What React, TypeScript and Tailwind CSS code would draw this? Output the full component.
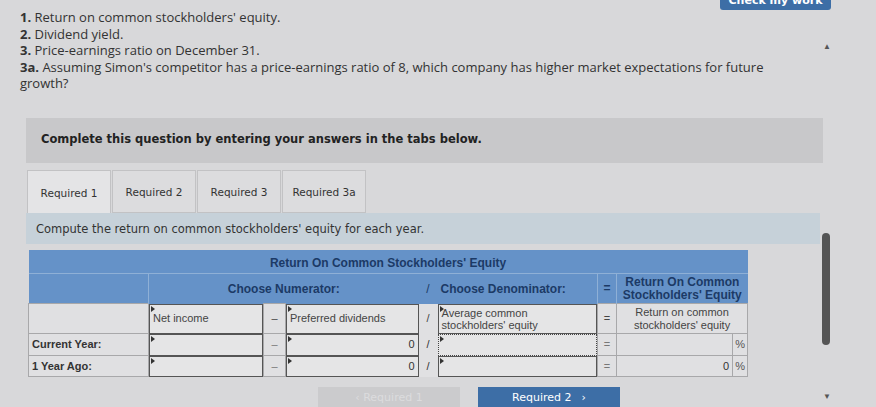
import React from "react";

const QUESTIONS = [
  { num: "1.", text: "Return on common stockholders' equity." },
  { num: "2.", text: "Dividend yield." },
  { num: "3.", text: "Price-earnings ratio on December 31." },
  {
    num: "3a.",
    text: "Assuming Simon's competitor has a price-earnings ratio of 8, which company has higher market expectations for future growth?",
  },
];

const TABS = ["Required 1", "Required 2", "Required 3", "Required 3a"];

function Marker() {
  return (
    <span className="absolute left-[1px] top-[1px] w-0 h-0 border-y-[3px] border-y-transparent border-l-[4px] border-l-[#333]" />
  );
}

function InputBox({
  children,
  align = "left",
  dotted = false,
}: {
  children?: React.ReactNode;
  align?: "left" | "right";
  dotted?: boolean;
}) {
  return (
    <div
      className={
        "relative h-full flex items-center px-[3px] bg-[#e5e5e6] " +
        (dotted ? "border border-dotted border-[#444] " : "border border-[#555] ") +
        (align === "right" ? "justify-end" : "justify-start")
      }
    >
      <Marker />
      {children}
    </div>
  );
}

export default function App() {
  return (
    <div className="relative w-[876px] h-[407px] overflow-hidden bg-[#d8d8da] text-[#333]">
      {/* top button, cut off by the window edge */}
      <div className="absolute left-[720px] top-[-10px] w-[111px] h-[20px] rounded-[3px] bg-[#3d6ea6] text-white text-[11px] font-bold flex items-end justify-center pb-[1px] [font-family:'DejaVu_Sans',sans-serif]">
        Check my work
      </div>

      {/* scrollbar */}
      <div className="absolute left-[823px] top-[40px] text-[8px] text-[#555]">▲</div>
      <div className="absolute left-[822px] top-[233px] w-[8px] h-[112px] rounded-full bg-[#555]" />
      <div className="absolute left-[823px] top-[390px] text-[8px] text-[#555]">▼</div>

      <div className="flex flex-col pl-[20px] pt-[9px] w-[823px]">
        <div className="flex flex-col text-[13px] leading-[16.5px] [font-family:'Open_Sans',sans-serif] pr-[30px]">
          {QUESTIONS.map((q) => (
            <p key={q.num}>
              <span className="font-bold">{q.num}</span> {q.text}
            </p>
          ))}
        </div>

        <div className="ml-[6px] mt-[26px] h-[45px] bg-[#c8c8ca] flex items-center pl-[15px] text-[11.5px] font-bold text-[#222] [font-family:'DejaVu_Sans',sans-serif]">
          Complete this question by entering your answers in the tabs below.
        </div>

        <div className="ml-[7px] mt-[7px] flex h-[43px] [font-family:'DejaVu_Sans',sans-serif] text-[10.5px] text-[#333]">
          {TABS.map((t, i) => (
            <div
              key={t}
              className={
                "flex items-center justify-center pt-[4px] w-[84px] border border-[#c2c2c4] mr-[1px] " +
                (i === 0 ? "bg-[#e4e4e6] border-b-0" : "bg-[#dcdcde]")
              }
            >
              {t}
            </div>
          ))}
        </div>

        <div className="ml-[6px] h-[31px] w-[794px] bg-[#c6d1d9] flex items-center pl-[10px] pt-[4px] text-[11.5px] text-[#333] [font-family:'DejaVu_Sans',sans-serif]">
          Compute the return on common stockholders' equity for each year.
        </div>

        <table className="ml-[8px] mt-[6px] table-fixed border-collapse w-[719px] text-[11px] [font-family:'Liberation_Sans',Arial,sans-serif]">
          <colgroup>
            <col className="w-[120px]" />
            <col className="w-[115px]" />
            <col className="w-[22px]" />
            <col className="w-[133px]" />
            <col className="w-[19px]" />
            <col className="w-[160px]" />
            <col className="w-[19px]" />
            <col className="w-[116px]" />
            <col className="w-[15px]" />
          </colgroup>
          <tbody>
            <tr className="h-[24px] bg-[#6592c8] text-[#1c3a66] font-bold text-[12px]">
              <td colSpan={9} className="text-center align-bottom pb-[1px] border-b border-[#8fb0d6]">
                Return On Common Stockholders' Equity
              </td>
            </tr>
            <tr className="h-[30px] bg-[#6592c8] text-[#1c3a66] font-bold text-[12px] leading-[13px]">
              <td className="border-r border-[#8fb0d6]" />
              <td colSpan={3} className="text-center pt-[2px]">
                Choose Numerator:
              </td>
              <td className="text-center font-normal pt-[2px]">/</td>
              <td className="pl-[3px] pt-[2px]">Choose Denominator:</td>
              <td className="text-center border-l border-[#8fb0d6]">=</td>
              <td colSpan={2} className="text-center border-l border-[#8fb0d6]">
                Return On Common
                <br />
                Stockholders' Equity
              </td>
            </tr>
            <tr className="h-[30px] bg-[#e0e0e2] text-[#444]">
              <td className="border border-[#a8a8aa]" />
              <td className="p-0 h-[30px]">
                <InputBox>Net income</InputBox>
              </td>
              <td className="text-center border border-[#a8a8aa]">–</td>
              <td className="p-0 h-[30px]">
                <InputBox>Preferred dividends</InputBox>
              </td>
              <td className="text-center">/</td>
              <td className="p-0 h-[30px]">
                <div className="relative h-full flex items-center px-[3px] leading-[12px] bg-[#e5e5e6] border border-[#555] border-b-dotted">
                  <Marker />
                  Average common
                  <br />
                  stockholders' equity
                </div>
              </td>
              <td className="text-center border border-[#a8a8aa]">=</td>
              <td colSpan={2} className="text-center leading-[13px] border border-[#a8a8aa]">
                Return on common
                <br />
                stockholders' equity
              </td>
            </tr>
            <tr className="h-[22px] bg-[#e0e0e2] text-[#333]">
              <td className="border border-[#a8a8aa] pl-[3px] font-bold text-[#333]">Current Year:</td>
              <td className="p-0 h-[22px]">
                <InputBox />
              </td>
              <td className="text-center border border-[#a8a8aa] text-[#777]">–</td>
              <td className="p-0 h-[22px]">
                <InputBox align="right">0</InputBox>
              </td>
              <td className="text-center">/</td>
              <td className="p-0 h-[22px]">
                <InputBox dotted />
              </td>
              <td className="text-center border border-[#a8a8aa] text-[#777]">=</td>
              <td className="border border-[#a8a8aa]" />
              <td className="border border-[#a8a8aa] text-center text-[#555]">%</td>
            </tr>
            <tr className="h-[21px] bg-[#e0e0e2] text-[#333]">
              <td className="border border-[#a8a8aa] pl-[3px] font-bold text-[#333]">1 Year Ago:</td>
              <td className="p-0 h-[21px]">
                <InputBox />
              </td>
              <td className="text-center border border-[#a8a8aa] text-[#777]">–</td>
              <td className="p-0 h-[21px]">
                <InputBox align="right">0</InputBox>
              </td>
              <td className="text-center">/</td>
              <td className="p-0 h-[21px]">
                <InputBox />
              </td>
              <td className="text-center border border-[#a8a8aa] text-[#777]">=</td>
              <td className="border border-[#a8a8aa] text-right pr-[3px]">0</td>
              <td className="border border-[#a8a8aa] text-center text-[#555]">%</td>
            </tr>
          </tbody>
        </table>

        <div className="flex ml-[298px] mt-[10px] gap-[18px] [font-family:'DejaVu_Sans',sans-serif] text-[11px]">
          <div className="w-[142px] h-[22px] bg-[#cbcbcd] text-[#dcdcde] flex items-center justify-center">
            ‹ Required 1
          </div>
          <div className="w-[142px] h-[22px] bg-[#3d6ea6] text-white flex items-center justify-center gap-[10px]">
            Required 2 <span>›</span>
          </div>
        </div>
      </div>
    </div>
  );
}
